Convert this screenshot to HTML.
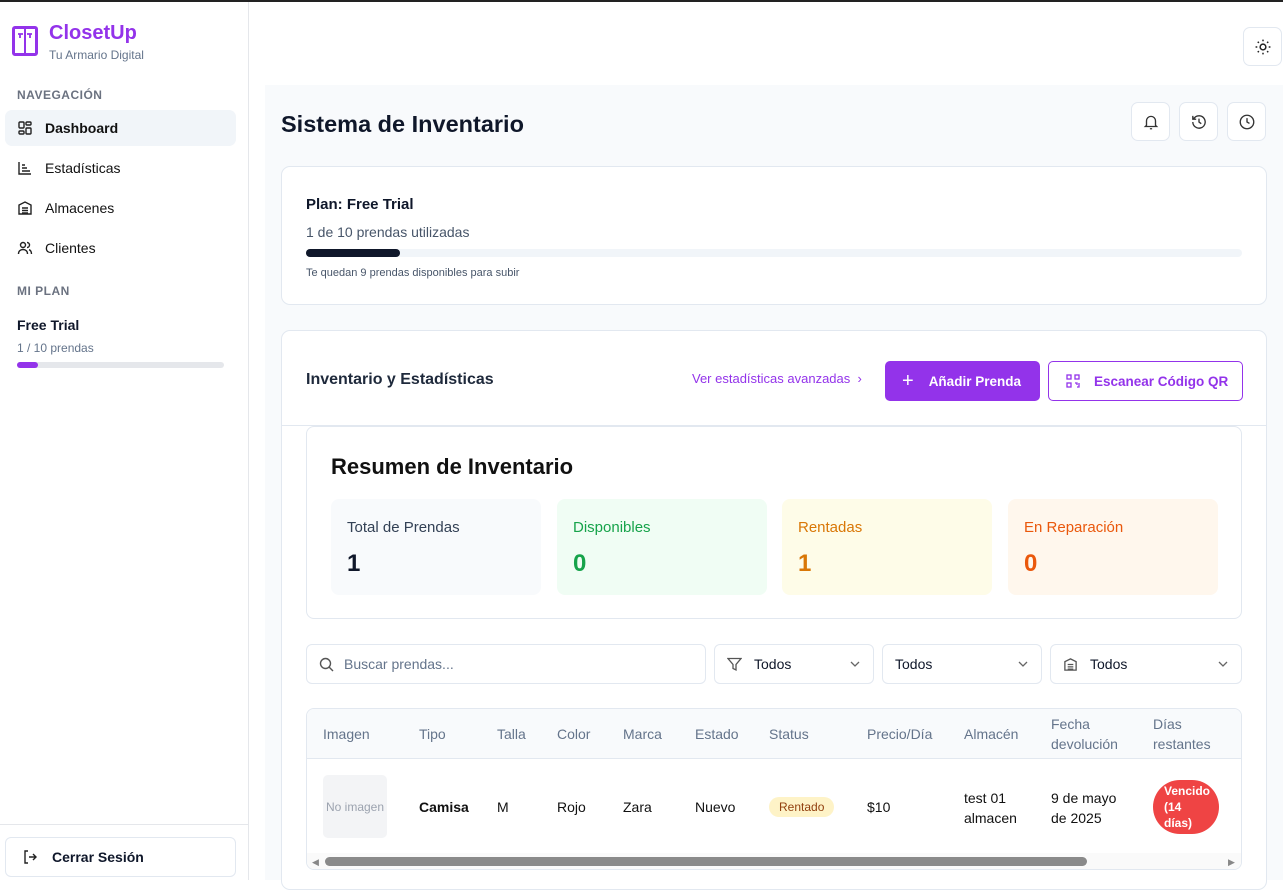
<!DOCTYPE html>
<html><head><meta charset="utf-8"><style>
*{box-sizing:border-box;margin:0;padding:0}
body{width:1283px;height:880px;overflow:hidden;font-family:"Liberation Sans",sans-serif;background:#fff;position:relative;color:#0f172a}
.a{position:absolute}
.top{left:0;top:0;width:1283px;height:2px;background:#222}
.side{left:0;top:2px;width:249px;height:878px;border-right:1px solid #e5e7eb;background:#fff}
.nav{position:absolute;left:5px;width:231px;height:36px;border-radius:7px;font-size:14px;display:flex;align-items:center;padding-left:12px;gap:12px;color:#111}
.nav svg{width:16px;height:16px}
.lbl{font-size:12px;font-weight:bold;color:#6b7280;letter-spacing:.5px}
.main{left:265px;top:85px;width:1018px;height:795px;background:#f8fafc}
.card{background:#fff;border:1px solid #e2e8f0;border-radius:9px}
.ib{width:39px;height:39px;border:1px solid #e2e8f0;border-radius:7px;background:#fff;display:flex;align-items:center;justify-content:center}
.st{border-radius:8px;width:210px;height:96px;top:499px;padding:20px 16px}
.st .t{font-size:15px}
.st .n{font-size:24px;font-weight:bold;margin-top:14px}
.sel{height:40px;top:644px;border:1px solid #e2e8f0;border-radius:6px;background:#fff;font-size:14px;display:flex;align-items:center;padding:0 12px}
</style></head><body>
<div class="a top"></div>
<div class="a side">
 <svg class="a" style="left:12px;top:24px" width="26" height="30" viewBox="0 0 26 30"><rect x="1.5" y="1.5" width="23" height="27" rx="1.5" fill="none" stroke="#9333ea" stroke-width="3"/><line x1="13" y1="2" x2="13" y2="28" stroke="#9333ea" stroke-width="2"/><path d="M6 8h5M15 8h5M8 8v4M18 8v4" stroke="#9333ea" stroke-width="1.8"/></svg>
 <div class="a" style="left:49px;top:20px;font-size:20px;font-weight:bold;color:#9333ea">ClosetUp</div>
 <div class="a" style="left:49px;top:46px;font-size:12px;color:#64748b">Tu Armario Digital</div>
 <div class="a lbl" style="left:17px;top:86px">NAVEGACIÓN</div>
 <div class="nav" style="top:108px;background:#f1f5f9;font-weight:bold"><svg viewBox="0 0 16 16" fill="none" stroke="#222" stroke-width="1.4"><rect x="2" y="2" width="5" height="6" rx="1"/><rect x="9" y="2" width="5" height="3" rx="1"/><rect x="9" y="8" width="5" height="6" rx="1"/><rect x="2" y="11" width="5" height="3" rx="1"/></svg>Dashboard</div>
 <div class="nav" style="top:148px"><svg viewBox="0 0 16 16" fill="none" stroke="#222" stroke-width="1.4"><path d="M2 2v12h12M5 11h8M5 8h5M5 5h3"/></svg>Estadísticas</div>
 <div class="nav" style="top:188px"><svg viewBox="0 0 16 16" fill="none" stroke="#222" stroke-width="1.4"><path d="M2 14V5l6-3 6 3v9z"/><path d="M5 8h6M5 10.5h6M5 13h6"/></svg>Almacenes</div>
 <div class="nav" style="top:228px"><svg viewBox="0 0 16 16" fill="none" stroke="#222" stroke-width="1.4"><circle cx="6" cy="5" r="2.5"/><path d="M1.5 14c0-3 2-4.5 4.5-4.5S10.5 11 10.5 14M10 2.5a2.5 2.5 0 010 5M12 9.7c1.5.5 2.5 2 2.5 4.3"/></svg>Clientes</div>
 <div class="a lbl" style="left:17px;top:282px">MI PLAN</div>
 <div class="a" style="left:17px;top:315px;font-size:14px;font-weight:bold">Free Trial</div>
 <div class="a" style="left:17px;top:339px;font-size:12px;color:#64748b">1 / 10 prendas</div>
 <div class="a" style="left:17px;top:360px;width:207px;height:6px;border-radius:3px;background:#e5e7eb"><div style="width:21px;height:6px;border-radius:3px;background:#9333ea"></div></div>
 <div class="a" style="left:0;top:822px;width:248px;border-top:1px solid #e5e7eb"></div>
 <div class="a" style="left:5px;top:835px;width:231px;height:40px;border:1px solid #e2e8f0;border-radius:6px;display:flex;align-items:center;padding-left:16px;gap:14px;font-size:14px;font-weight:bold"><svg width="16" height="16" viewBox="0 0 16 16" fill="none" stroke="#222" stroke-width="1.4"><path d="M6 2H3v12h3M7 8h7M11 5l3 3-3 3"/></svg>Cerrar Sesión</div>
</div>
<div class="a ib" style="left:1243px;top:27px"><svg width="16" height="16" viewBox="0 0 14 14" fill="none" stroke="#222" stroke-width="1.3"><circle cx="7" cy="7" r="2.5"/><path d="M7 0.5v1.5M7 12v1.5M0.5 7h1.5M12 7h1.5M2.4 2.4l1 1M10.6 10.6l1 1M2.4 11.6l1-1M10.6 3.4l1-1"/></svg></div>
<div class="a main"></div>
<div class="a" style="left:281px;top:111px;font-size:23.5px;font-weight:bold">Sistema de Inventario</div>
<div class="a ib" style="left:1131px;top:102px"><svg width="18" height="18" viewBox="0 0 16 16" fill="none" stroke="#333" stroke-width="1.2"><path d="M4 11V7a4 4 0 018 0v4l1 1H3zM7 14h2"/></svg></div>
<div class="a ib" style="left:1179px;top:102px"><svg width="18" height="18" viewBox="0 0 16 16" fill="none" stroke="#333" stroke-width="1.2"><path d="M2.5 8a5.5 5.5 0 101.6-3.9L2.5 5.5M2.5 2.5v3h3M8 5v3l2 1.5"/></svg></div>
<div class="a ib" style="left:1227px;top:102px"><svg width="18" height="18" viewBox="0 0 16 16" fill="none" stroke="#333" stroke-width="1.2"><circle cx="8" cy="8" r="6"/><path d="M8 4.5V8l2.2 1.3"/></svg></div>
<div class="a card" style="left:281px;top:166px;width:986px;height:139px">
 <div class="a" style="left:24px;top:29px;font-size:15px;font-weight:bold">Plan: Free Trial</div>
 <div class="a" style="left:24px;top:57px;font-size:14px;color:#475569">1 de 10 prendas utilizadas</div>
 <div class="a" style="left:24px;top:82px;width:936px;height:8px;border-radius:4px;background:#f1f5f9"><div style="width:94px;height:8px;border-radius:4px;background:#0f172a"></div></div>
 <div class="a" style="left:24px;top:100px;font-size:11px;color:#475569">Te quedan 9 prendas disponibles para subir</div>
</div>
<div class="a card" style="left:281px;top:330px;width:986px;height:560px">
 <div class="a" style="left:24px;top:40px;font-size:16px;font-weight:bold;color:#1e293b">Inventario y Estadísticas</div>
 <div class="a" style="left:410px;top:40px;font-size:13px;color:#9333ea">Ver estadísticas avanzadas &nbsp;›</div>
 <div class="a" style="left:603px;top:30px;width:155px;height:40px;background:#9333ea;border-radius:5px;color:#fff;font-size:13.5px;font-weight:bold;display:flex;align-items:center;padding-left:17px;gap:15px"><span style="font-size:20px;font-weight:normal">+</span>Añadir Prenda</div>
 <div class="a" style="left:766px;top:30px;width:195px;height:40px;border:1px solid #9333ea;border-radius:5px;color:#9333ea;font-size:13.5px;font-weight:bold;display:flex;align-items:center;padding-left:17px;gap:14px;white-space:nowrap"><svg width="14" height="14" viewBox="0 0 14 14" fill="none" stroke="#9333ea" stroke-width="1.3"><rect x="1" y="1" width="4" height="4"/><rect x="9" y="1" width="4" height="4"/><rect x="1" y="9" width="4" height="4"/><path d="M9 9h2v2M13 9v4h-2"/></svg>Escanear Código QR</div>
 <div class="a" style="left:0;top:94px;width:984px;border-top:1px solid #e2e8f0"></div>
</div>
<div class="a card" style="left:306px;top:426px;width:936px;height:193px;border-radius:8px">
 <div class="a" style="left:24px;top:27px;font-size:22px;font-weight:bold;color:#111">Resumen de Inventario</div>
</div>
<div class="a st" style="left:331px;background:#f8fafc"><div class="t" style="color:#334155">Total de Prendas</div><div class="n">1</div></div>
<div class="a st" style="left:557px;background:#f0fdf4"><div class="t" style="color:#16a34a">Disponibles</div><div class="n" style="color:#16a34a">0</div></div>
<div class="a st" style="left:782px;background:#fefce8"><div class="t" style="color:#d97706">Rentadas</div><div class="n" style="color:#d97706">1</div></div>
<div class="a st" style="left:1008px;background:#fff7ed"><div class="t" style="color:#ea580c">En Reparación</div><div class="n" style="color:#ea580c">0</div></div>
<div class="a sel" style="left:306px;width:400px;color:#64748b;gap:10px"><svg width="15" height="15" viewBox="0 0 15 15" fill="none" stroke="#555" stroke-width="1.4"><circle cx="6.5" cy="6.5" r="5"/><path d="M10 10l4 4"/></svg>Buscar prendas...</div>
<div class="a sel" style="left:714px;width:160px;gap:12px"><svg width="15" height="15" viewBox="0 0 15 15" fill="none" stroke="#555" stroke-width="1.3"><path d="M1 1.5h13L9 7.5V13l-3-1.5v-4z"/></svg>Todos<svg style="margin-left:auto" width="12" height="12" viewBox="0 0 12 12" fill="none" stroke="#666" stroke-width="1.3"><path d="M2 4l4 4 4-4"/></svg></div>
<div class="a sel" style="left:882px;width:160px">Todos<svg style="margin-left:auto" width="12" height="12" viewBox="0 0 12 12" fill="none" stroke="#666" stroke-width="1.3"><path d="M2 4l4 4 4-4"/></svg></div>
<div class="a sel" style="left:1050px;width:192px;gap:12px"><svg width="15" height="15" viewBox="0 0 16 16" fill="none" stroke="#555" stroke-width="1.4"><path d="M2 14V5l6-3 6 3v9z"/><path d="M5 8h6M5 10.5h6M5 13h6"/></svg>Todos<svg style="margin-left:auto" width="12" height="12" viewBox="0 0 12 12" fill="none" stroke="#666" stroke-width="1.3"><path d="M2 4l4 4 4-4"/></svg></div>
<div class="a" style="left:306px;top:708px;width:936px;height:162px;border:1px solid #e2e8f0;border-radius:8px;overflow:hidden;background:#fff">
 <div class="a" style="left:0;top:0;width:936px;height:50px;background:#f8fafc;border-bottom:1px solid #e2e8f0"></div>
 <div style="font-size:14px;color:#64748b">
  <span class="a" style="left:16px;top:17px">Imagen</span><span class="a" style="left:112px;top:17px">Tipo</span><span class="a" style="left:190px;top:17px">Talla</span><span class="a" style="left:250px;top:17px">Color</span><span class="a" style="left:316px;top:17px">Marca</span><span class="a" style="left:388px;top:17px">Estado</span><span class="a" style="left:462px;top:17px">Status</span><span class="a" style="left:560px;top:17px">Precio/Día</span><span class="a" style="left:657px;top:17px">Almacén</span><span class="a" style="left:744px;top:5px;line-height:20px">Fecha<br>devolución</span><span class="a" style="left:846px;top:5px;line-height:20px">Días<br>restantes</span>
 </div>
 <div class="a" style="left:16px;top:66px;width:64px;height:63px;background:#f3f4f6;border-radius:5px;font-size:12px;color:#9ca3af;display:flex;align-items:center;justify-content:center">No imagen</div>
 <div style="font-size:14px;color:#111">
  <span class="a" style="left:112px;top:90px;font-weight:bold">Camisa</span><span class="a" style="left:190px;top:90px">M</span><span class="a" style="left:250px;top:90px">Rojo</span><span class="a" style="left:316px;top:90px">Zara</span><span class="a" style="left:388px;top:90px">Nuevo</span>
  <span class="a" style="left:462px;top:88px;background:#fef3c7;color:#92400e;font-size:12px;padding:3px 10px;border-radius:10px">Rentado</span>
  <span class="a" style="left:560px;top:90px">$10</span><span class="a" style="left:657px;top:79px;line-height:20px">test 01<br>almacen</span><span class="a" style="left:744px;top:79px;line-height:20px">9 de mayo<br>de 2025</span>
  <span class="a" style="left:846px;top:71px;width:66px;height:54px;border-radius:30px;background:#ef4444;color:#fff;font-size:12px;font-weight:bold;line-height:16px;padding:3px 0 0 11px">Vencido<br>(14<br>días)</span>
 </div>
 <div class="a" style="left:0;top:144px;width:936px;height:18px;background:#fafafa"></div>
 <div class="a" style="left:18px;top:148px;width:762px;height:9px;border-radius:5px;background:#8a8a8a"></div>
 <div class="a" style="left:5px;top:148px;font-size:9px;color:#888">◀</div>
 <div class="a" style="left:921px;top:148px;font-size:9px;color:#888">▶</div>
</div>
</body></html>
